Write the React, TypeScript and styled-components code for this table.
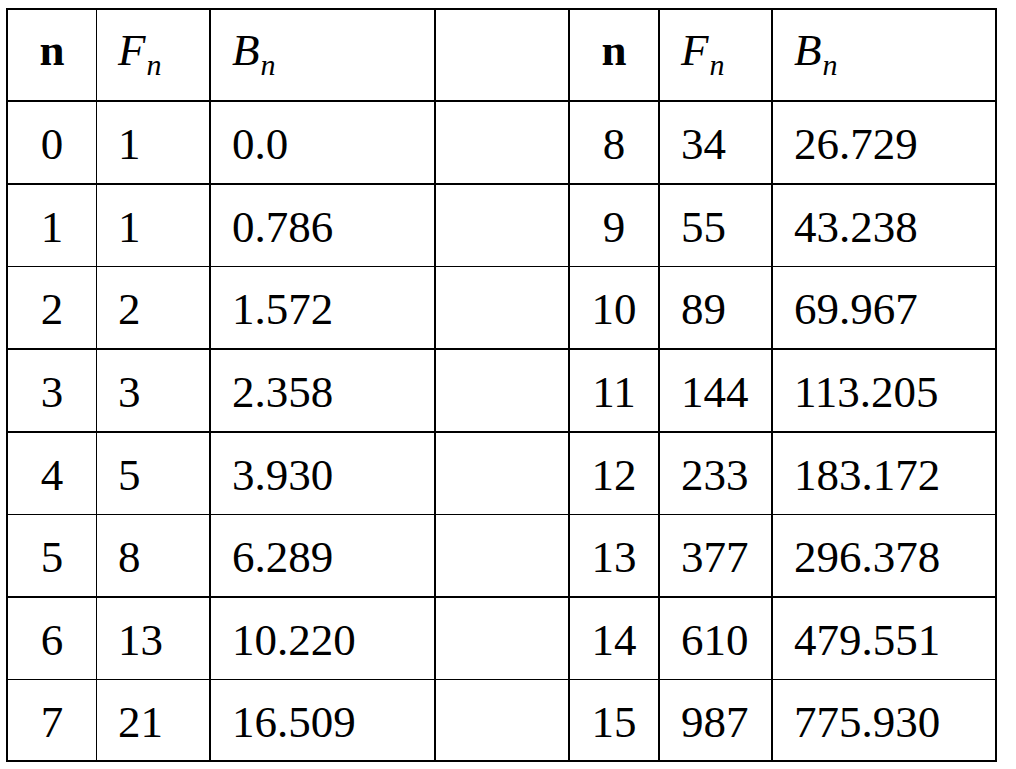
import React from 'react';
import styled, { createGlobalStyle } from 'styled-components';

const GlobalStyle = createGlobalStyle`
  html, body {
    margin: 0;
    padding: 0;
    background: #fff;
  }
  body {
    font-family: "Liberation Serif", "Times New Roman", serif;
    color: #000;
  }
`;

// outer width of each column (interior + its right rule)
const columnWidths = [89, 114, 225, 134, 90, 113, 224];
const columnRules = [1, 2, 2, 2, 2, 2, 2];
// outer height of each row (interior + its bottom rule)
const rowHeights = [92, 83, 82, 83, 83, 82, 83, 82, 82];
const rowRules = [2, 2, 1, 2, 2, 1, 2, 1, 2];

const rows: [number, number, string][] = [
  [0, 1, '0.0'],
  [1, 1, '0.786'],
  [2, 2, '1.572'],
  [3, 3, '2.358'],
  [4, 5, '3.930'],
  [5, 8, '6.289'],
  [6, 13, '10.220'],
  [7, 21, '16.509'],
  [8, 34, '26.729'],
  [9, 55, '43.238'],
  [10, 89, '69.967'],
  [11, 144, '113.205'],
  [12, 233, '183.172'],
  [13, 377, '296.378'],
  [14, 610, '479.551'],
  [15, 987, '775.930'],
];

const Table = styled.div`
  display: grid;
  grid-template-columns: ${columnWidths.map((w) => `${w}px`).join(' ')};
  grid-template-rows: ${rowHeights.map((h) => `${h}px`).join(' ')};
  width: max-content;
  margin: 8px 0 0 6px;
  border-left: 2px solid #000;
  border-top: 2px solid #000;
`;

const Cell = styled.div<{ $rule: number; $bottom: number; $center?: boolean; $head?: boolean }>`
  box-sizing: border-box;
  display: flex;
  align-items: center;
  justify-content: ${(p) => (p.$center ? 'center' : 'flex-start')};
  padding: ${(p) => (p.$head ? '0 0 10px' : '3px 0 0')};
  padding-left: ${(p) => (p.$center ? '0' : '21px')};
  border-right: ${(p) => p.$rule}px solid #000;
  border-bottom: ${(p) => p.$bottom}px solid #000;
  font-size: 45px;
  line-height: normal;
  white-space: nowrap;
`;

const Label = styled.span`
  display: inline-block;
`;

const BoldN = styled.span`
  font-weight: bold;
`;

const MathVar = styled.span`
  font-style: italic;
`;

const Sub = styled.span`
  position: relative;
  top: 10px;
  font-size: 30px;
  font-style: italic;
  margin-left: 1px;
`;

const cellProps = (col: number, row: number) => ({
  $rule: columnRules[col],
  $bottom: rowRules[row],
});

const Symbol: React.FC<{ letter: string }> = ({ letter }) => (
  <Label>
    <MathVar>{letter}</MathVar>
    <Sub>n</Sub>
  </Label>
);

const App: React.FC = () => {
  const left = rows.slice(0, 8);
  const right = rows.slice(8);

  return (
    <>
      <GlobalStyle />
      <Table>
        {[0, 4].map((offset) => (
          <React.Fragment key={`h${offset}`}>
            <Cell {...cellProps(offset, 0)} $center $head>
              <BoldN>n</BoldN>
            </Cell>
            <Cell {...cellProps(offset + 1, 0)} $head>
              <Symbol letter="F" />
            </Cell>
            <Cell {...cellProps(offset + 2, 0)} $head>
              <Symbol letter="B" />
            </Cell>
            {offset === 0 && <Cell {...cellProps(3, 0)} $head />}
          </React.Fragment>
        ))}
        {left.map((l, i) => {
          const r = right[i];
          const row = i + 1;
          return (
            <React.Fragment key={l[0]}>
              <Cell {...cellProps(0, row)} $center>{l[0]}</Cell>
              <Cell {...cellProps(1, row)}>{l[1]}</Cell>
              <Cell {...cellProps(2, row)}>{l[2]}</Cell>
              <Cell {...cellProps(3, row)} />
              <Cell {...cellProps(4, row)} $center>{r[0]}</Cell>
              <Cell {...cellProps(5, row)}>{r[1]}</Cell>
              <Cell {...cellProps(6, row)}>{r[2]}</Cell>
            </React.Fragment>
          );
        })}
      </Table>
    </>
  );
};

export default App;
